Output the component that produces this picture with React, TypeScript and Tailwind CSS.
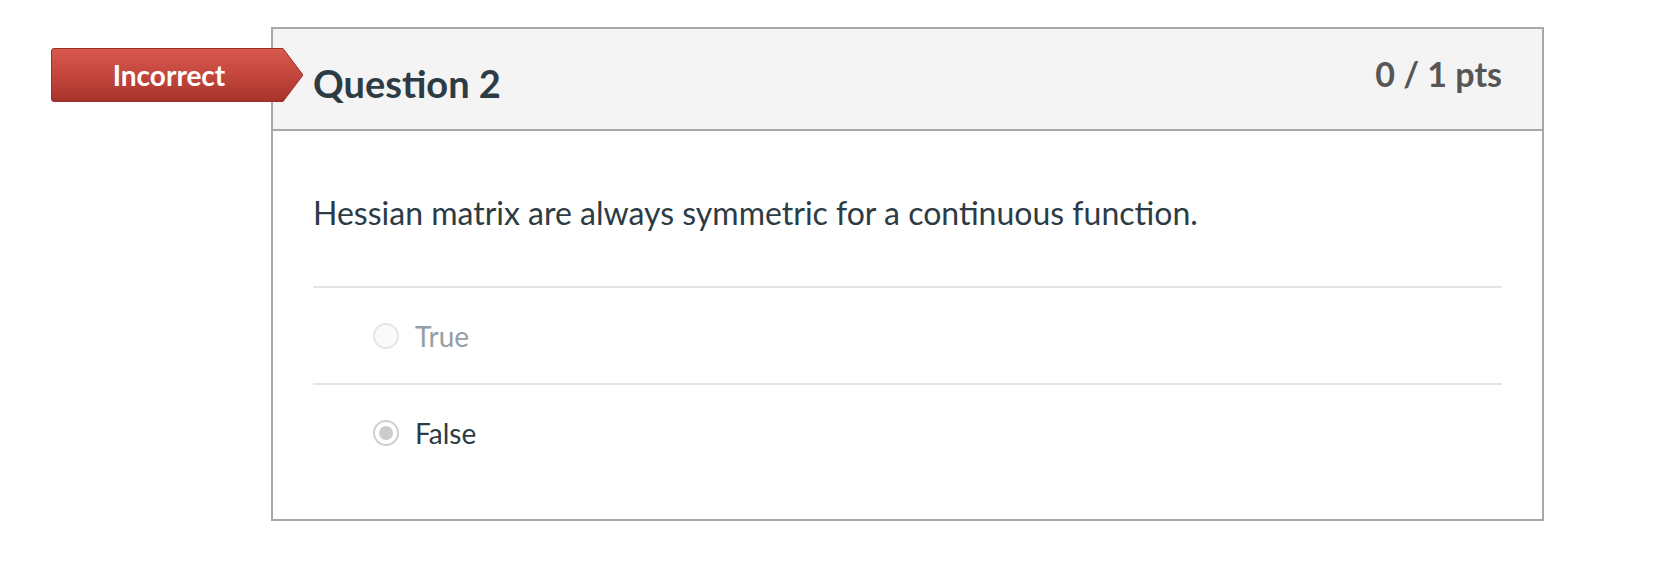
import React from "react";

function IncorrectBadge() {
  return (
    <div className="absolute left-[-222px] top-[19px] h-[54px] w-[252px]">
      <svg width="252" height="54" viewBox="0 0 252 54" className="absolute inset-0">
        <defs>
          <linearGradient id="badgeFill" x1="0" y1="0" x2="0" y2="1">
            <stop offset="0" stopColor="#d9594f" />
            <stop offset="0.5" stopColor="#c4463d" />
            <stop offset="1" stopColor="#a6342c" />
          </linearGradient>
        </defs>
        <path
          d="M3 0.5 H232 L252 27 L232 53.5 H3 Q0.5 53.5 0.5 51 V3 Q0.5 0.5 3 0.5 Z"
          fill="url(#badgeFill)"
          stroke="#9a302a"
          strokeWidth="1"
        />
      </svg>
      <span className="relative flex h-full w-[236px] items-center justify-center font-['Lato'] text-[28px] font-bold leading-none text-white">
        Incorrect
      </span>
    </div>
  );
}

function RadioOption({ label, selected }: { label: string; selected: boolean }) {
  return (
    <div className="flex h-[95px] items-center pl-[60px]">
      {selected ? (
        <span className="flex h-[26px] w-[26px] items-center justify-center rounded-full border-2 border-[#cfcfcf] bg-white">
          <span className="h-[14px] w-[14px] rounded-full bg-[#cccccc]" />
        </span>
      ) : (
        <span className="h-[26px] w-[26px] rounded-full border-2 border-[#e6e6e6] bg-[#fafafa]" />
      )}
      <span
        className={
          selected
            ? "ml-[16px] text-[28px] leading-none text-[#2d3b45]"
            : "ml-[16px] text-[28px] leading-none text-[#979ea3]"
        }
      >
        {label}
      </span>
    </div>
  );
}

export default function App() {
  return (
    <div className="min-h-[570px] bg-white pl-[271px] pt-[27px] font-['Lato','Liberation_Sans',sans-serif]">
      <div className="relative w-[1273px] border-2 border-[#a8a8a8]">
        <IncorrectBadge />
        <div className="flex h-[102px] items-start justify-between border-b-2 border-[#a8a8a8] bg-[#f4f4f4] px-[40px]">
          <h2 className="pt-[35px] text-[38px] font-bold leading-none text-[#2d3b45]">
            Question 2
          </h2>
          <span className="pt-[28px] text-[34px] font-bold leading-none text-[#565656]">
            0 / 1 pts
          </span>
        </div>
        <div className="px-[40px] pb-[39px] pt-[64px]">
          <p className="text-[32px] leading-[36px] text-[#2d3b45]">
            Hessian matrix are always symmetric for a continuous function.
          </p>
          <div className="mt-[55px] border-t-2 border-[#e4e4e4]">
            <RadioOption label="True" selected={false} />
          </div>
          <div className="border-t-2 border-[#e4e4e4]">
            <RadioOption label="False" selected={true} />
          </div>
        </div>
      </div>
    </div>
  );
}
